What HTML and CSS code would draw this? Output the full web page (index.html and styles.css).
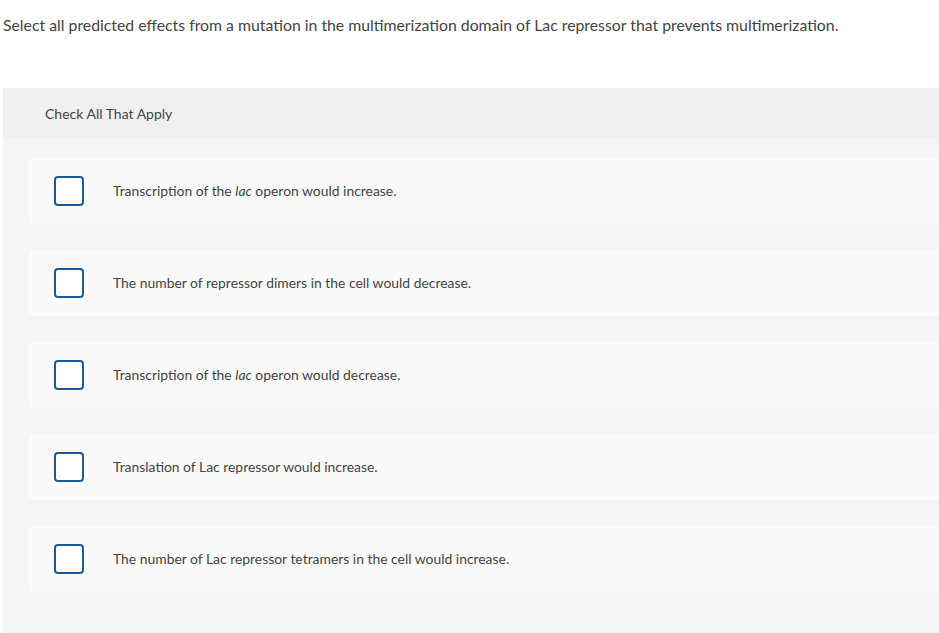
FILE: index.html
```html
<!DOCTYPE html>
<html>
<head>
<meta charset="utf-8">
<link rel="stylesheet" href="styles.css">
</head>
<body>
<div class="page">
  <p class="prompt">Select all predicted effects from a mutation in the multimerization domain of Lac repressor that prevents multimerization.</p>
  <div class="panel">
    <div class="panel-head">Check All That Apply</div>
    <div class="options">
      <label class="option"><span class="box"></span><span class="text">Transcription of the <i>lac</i> operon would increase.</span></label>
      <label class="option"><span class="box"></span><span class="text">The number of repressor dimers in the cell would decrease.</span></label>
      <label class="option"><span class="box"></span><span class="text">Transcription of the <i>lac</i> operon would decrease.</span></label>
      <label class="option"><span class="box"></span><span class="text">Translation of Lac repressor would increase.</span></label>
      <label class="option"><span class="box"></span><span class="text">The number of Lac repressor tetramers in the cell would increase.</span></label>
    </div>
  </div>
</div>
</body>
</html>
```
FILE: styles.css
```css
html, body {
  margin: 0;
  padding: 0;
  background: #ffffff;
  overflow: hidden;
}
.page {
  width: 939px;
  height: 633px;
  padding-left: 3px;
  box-sizing: border-box;
  font-family: "Lato", "Liberation Sans", sans-serif;
  color: #444444;
}
.prompt {
  margin: 0;
  padding-top: 15px;
  height: 88px;
  box-sizing: border-box;
  font-size: 15.8px;
  line-height: 20px;
  color: #444444;
}
.panel {
  background: #f5f5f5;
  height: 560px;
}
.panel-head {
  background: #f0f0f0;
  height: 50px;
  padding-left: 42px;
  display: flex;
  align-items: center;
  font-size: 14px;
  color: #444444;
}
.options {
  padding: 20px 0 0 26px;
  display: flex;
  flex-direction: column;
  gap: 26px;
}
.option {
  background: #fafafa;
  height: 66px;
  border-radius: 3px 0 0 3px;
  display: flex;
  align-items: center;
  padding-left: 25px;
}
.box {
  width: 30px;
  height: 30px;
  box-sizing: border-box;
  border: 2px solid #1f5a96;
  border-radius: 4px;
  background: #fff;
  flex: none;
}
.text {
  margin-left: 29px;
  margin-bottom: 1px;
  font-size: 13.9px;
  color: #444444;
}
.text i {
  font-style: italic;
}
```
